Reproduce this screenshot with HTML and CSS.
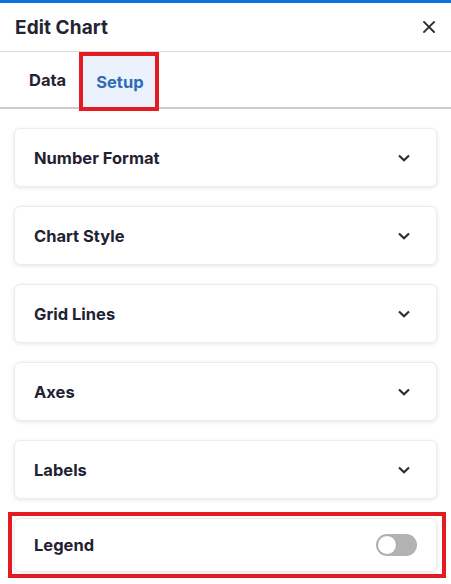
FILE: index.html
```html
<!DOCTYPE html>
<html lang="en">
<head>
<meta charset="utf-8">
<title>Edit Chart</title>
<link rel="stylesheet" href="styles.css">
</head>
<body>
<div class="panel">
  <div class="topbar"></div>
  <header class="header">
    <h1 class="title">Edit Chart</h1>
    <button class="close" aria-label="Close">
      <svg width="12" height="12" viewBox="0 0 12 12"><path d="M1 1L11 11M11 1L1 11" stroke="#2b2d36" stroke-width="1.8" stroke-linecap="square" fill="none"/></svg>
    </button>
  </header>
  <nav class="tabs">
    <div class="tab">Data</div>
    <div class="tab tab-active">Setup</div>
  </nav>
  <div class="sections">
    <div class="card"><span class="label">Number Format</span><svg class="chev" width="12" height="8" viewBox="0 0 12 8"><path d="M1 1.5L6 6.2L11 1.5" stroke="#2b2d36" stroke-width="2.2" fill="none"/></svg></div>
    <div class="card"><span class="label">Chart Style</span><svg class="chev" width="12" height="8" viewBox="0 0 12 8"><path d="M1 1.5L6 6.2L11 1.5" stroke="#2b2d36" stroke-width="2.2" fill="none"/></svg></div>
    <div class="card"><span class="label">Grid Lines</span><svg class="chev" width="12" height="8" viewBox="0 0 12 8"><path d="M1 1.5L6 6.2L11 1.5" stroke="#2b2d36" stroke-width="2.2" fill="none"/></svg></div>
    <div class="card"><span class="label">Axes</span><svg class="chev" width="12" height="8" viewBox="0 0 12 8"><path d="M1 1.5L6 6.2L11 1.5" stroke="#2b2d36" stroke-width="2.2" fill="none"/></svg></div>
    <div class="card"><span class="label">Labels</span><svg class="chev" width="12" height="8" viewBox="0 0 12 8"><path d="M1 1.5L6 6.2L11 1.5" stroke="#2b2d36" stroke-width="2.2" fill="none"/></svg></div>
    <div class="highlight">
      <div class="card card-short"><span class="label">Legend</span><span class="toggle"><span class="knob"></span></span></div>
    </div>
  </div>
</div>
</body>
</html>
```

FILE: styles.css
```css
* { box-sizing: border-box; }
html, body { margin: 0; padding: 0; background: #fff; }
body { font-family: Inter, "Noto Sans", "Liberation Sans", sans-serif; color: #1f2233; }
.panel { width: 451px; height: 584px; overflow: hidden; }
.topbar { height: 3px; background: #0b74de; }
.header {
  height: 49px;
  border-bottom: 1px solid #dcdcdc;
  display: flex;
  align-items: center;
  justify-content: space-between;
  padding: 0 16px 0 15px;
}
.title { margin: 0; font-size: 19px; font-weight: 700; color: #222433; letter-spacing: 0.1px; }
.close { border: 0; background: none; padding: 0; width: 12px; height: 12px; display: flex; }
.tabs {
  display: flex;
  height: 57px;
  border-bottom: 2px solid #cccccc;
  padding-left: 12px;
  align-items: flex-start;
}
.tab {
  height: 55px;
  display: flex;
  align-items: center;
  padding: 0 13px 0 17px;
  font-size: 16.5px;
  font-weight: 700;
  color: #222433;
}
.tab-active {
  height: 59px;
  padding: 0 11px 0 13px;
  border: 4px solid #e31b23;
  background: #ebf2fb;
  color: #2e6db4;
  position: relative;
}
.sections {
  padding: 19px 14px 0 14px;
  display: flex;
  flex-direction: column;
  gap: 19px;
}
.card {
  height: 59px;
  border: 1px solid #ececec;
  border-radius: 6px;
  box-shadow: 0 1px 4px rgba(0, 0, 0, 0.10);
  background: #fff;
  display: flex;
  align-items: center;
  justify-content: space-between;
  padding: 0 26px 0 19px;
}
.card-short { height: 54px; padding-right: 19px; }
.label { font-size: 16.5px; font-weight: 700; color: #1f2233; }
.chev { display: block; }
.highlight {
  margin: -6px -9px 0 -6px;
  border: 4px solid #e31b23;
  padding: 2px 5px 2px 2px;
}
.toggle {
  width: 41px;
  height: 22px;
  border-radius: 11px;
  background: #b3b3b3;
  position: relative;
  display: block;
}
.knob {
  position: absolute;
  left: 1px;
  top: 1px;
  width: 20px;
  height: 20px;
  border-radius: 50%;
  background: #fff;
  border: 1px solid #a8a8a8;
}
```
